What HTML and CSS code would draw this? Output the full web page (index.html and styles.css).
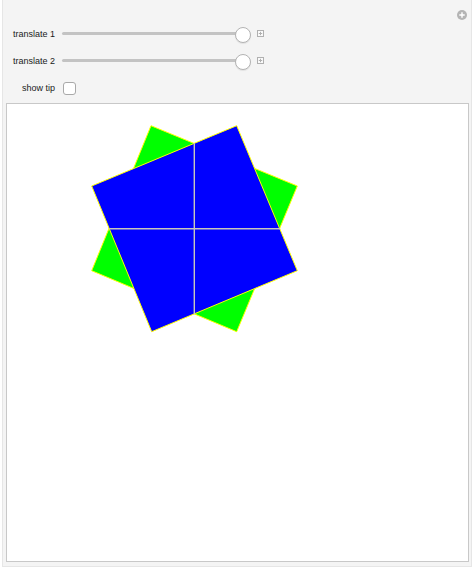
FILE: index.html
```html
<!DOCTYPE html>
<html>
<head>
<meta charset="utf-8">
<link rel="stylesheet" href="styles.css">
</head>
<body>
<div class="panel">
  <div class="header">
    <span class="add-btn"><svg width="10" height="10" viewBox="0 0 10 10"><circle cx="5" cy="5" r="5" fill="#b4b4b4"/><path d="M5 2.3V7.7M2.3 5H7.7" stroke="#fff" stroke-width="1.4"/></svg></span>
  </div>
  <div class="controls">
    <div class="label">translate 1</div>
    <div class="ctrl">
      <div class="slider"><div class="track"></div><div class="thumb"></div></div>
      <span class="plus"><svg width="7" height="7" viewBox="0 0 7 7"><rect x="0.5" y="0.5" width="6" height="6" fill="#fafafa" stroke="#b0b0b0"/><path d="M3.5 1.8V5.2M1.8 3.5H5.2" stroke="#b0b0b0" stroke-width="1"/></svg></span>
    </div>
    <div class="label">translate 2</div>
    <div class="ctrl">
      <div class="slider"><div class="track"></div><div class="thumb"></div></div>
      <span class="plus"><svg width="7" height="7" viewBox="0 0 7 7"><rect x="0.5" y="0.5" width="6" height="6" fill="#fafafa" stroke="#b0b0b0"/><path d="M3.5 1.8V5.2M1.8 3.5H5.2" stroke="#b0b0b0" stroke-width="1"/></svg></span>
    </div>
    <div class="label tip">show tip</div>
    <div class="ctrl">
      <span class="checkbox"></span>
    </div>
  </div>
  <div class="plot">
    <svg width="461" height="457" viewBox="7 104 461 457">
      <polygon points="151,125.7 297.3,186 236.7,331.7 91.7,270.7" fill="#00ff00" stroke="#ffff00" stroke-width="1"/>
      <polygon points="91.7,186 236.7,125.7 297.3,270.7 151.7,331.7" fill="#0000ff" stroke="#ffff00" stroke-width="1"/>
      <line x1="194.3" y1="143.3" x2="194.3" y2="314.3" stroke="#c6c6bc" stroke-width="1.4"/>
      <line x1="109.3" y1="228.7" x2="280" y2="228.7" stroke="#c6c6bc" stroke-width="1.4"/>
    </svg>
  </div>
</div>
</body>
</html>
```

FILE: styles.css
```css
html, body {
  margin: 0;
  padding: 0;
  background: #ffffff;
}
body {
  font-family: "Liberation Sans", Arial, sans-serif;
  font-size: 9px;
  color: #1a1a1a;
}
.panel {
  margin: 0 2px;
  width: 470px;
  box-sizing: border-box;
  background: #f4f4f4;
  border: 1px solid #e6e6e6;
  border-top: none;
  padding: 9px 3px 4px 3px;
  display: flex;
  flex-direction: column;
}
.header {
  height: 12px;
  display: flex;
  justify-content: flex-end;
  align-items: flex-start;
  padding-right: 1px;
}
.add-btn {
  display: block;
  width: 10px;
  height: 10px;
  margin-top: 1px;
}
.add-btn svg { display: block; }
.controls {
  display: grid;
  grid-template-columns: 50px auto;
  grid-template-rows: 27px 27px 26px;
  column-gap: 6px;
  align-items: center;
}
.label {
  text-align: right;
  line-height: 11px;
  padding-right: 1px;
}
.label.tip {
  padding-right: 1px;
}
.ctrl {
  display: flex;
  align-items: center;
  gap: 6px;
}
.slider {
  position: relative;
  width: 189px;
  height: 16px;
}
.track {
  position: absolute;
  left: 0;
  right: 6px;
  top: 5px;
  height: 3px;
  border-radius: 2px;
  background: #c3c3c3;
}
.thumb {
  position: absolute;
  right: 0;
  top: 0;
  width: 14px;
  height: 14px;
  border-radius: 50%;
  background: #ffffff;
  border: 1px solid #b3b3b3;
  box-shadow: 0 1px 1px rgba(0,0,0,0.08);
}
.plus {
  display: block;
  width: 7px;
  height: 7px;
  margin-top: -2px;
}
.plus svg { display: block; }
.checkbox {
  display: block;
  width: 11px;
  height: 11px;
  border: 1px solid #a9a9a9;
  border-radius: 3px;
  background: #ffffff;
  margin-left: 1px;
}
.plot {
  margin-top: 2px;
  width: 463px;
  height: 459px;
  box-sizing: border-box;
  border: 1px solid #c8c8c8;
  background: #ffffff;
}
.plot svg { display: block; }
```
